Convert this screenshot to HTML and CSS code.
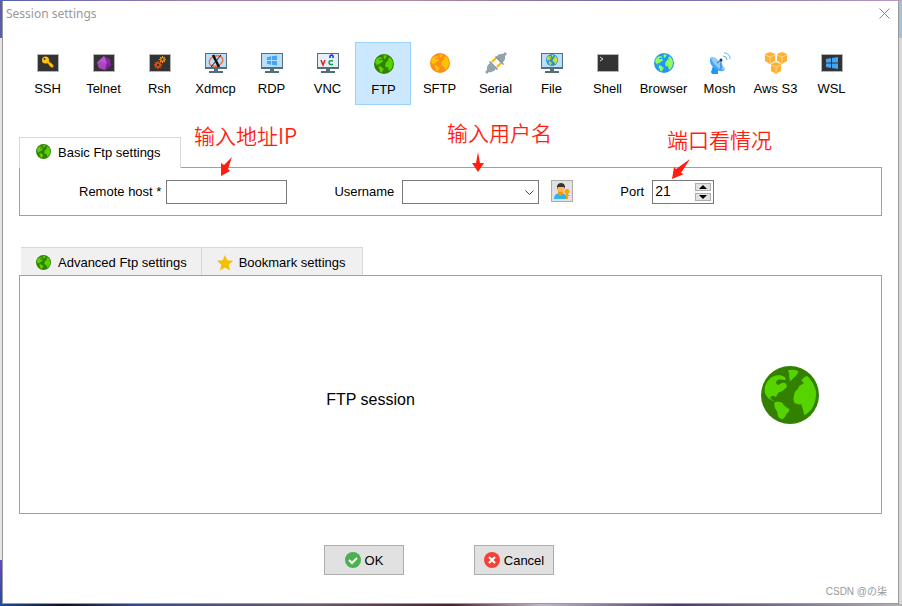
FILE: index.html
```
<!DOCTYPE html>
<html lang="en">
<head>
    <meta charset="utf-8">
    <title>Session settings</title>
    <link rel="stylesheet" href="styles.css">
</head>
<body>
    <!-- shared icon shapes -->
    <svg class="symbols" aria-hidden="true">
        <symbol id="globe" viewBox="63 48 174 174">
            <circle class="sea" cx="150" cy="135" r="87"/>
            <path class="land" d="M74 118C76 96 92 78 112 76C126 75 138 80 137 89C130 93 124 86 114 90C106 94 107 102 114 105C120 104 122 98 130 98C139 99 143 106 139 113C132 117 130 123 120 126C112 128 112 136 108 141C104 137 94 136 91 142C90 148 98 150 104 154C90 152 72 138 74 118Z"/>
            <path class="land" d="M144 61Q160 57 175 64Q174 74 165 80Q158 85 152 94Q148 90 148 82Q149 72 144 61Z"/>
            <path class="land" d="M105 156Q116 153 127 158Q130 167 148 177Q149 184 139 192Q136 204 126 208Q117 206 114 198Q115 186 106 176Q100 164 105 156Z"/>
            <path class="land" d="M201 77Q190 82 183 92Q192 95 190 102Q178 104 174 116Q163 124 162 136Q158 146 163 158Q172 165 184 163Q189 176 193 196Q211 187 220 168Q229 148 228 124Q220 94 201 77Z"/>
        </symbol>
        <symbol id="console" viewBox="0 0 22 22">
            <path fill="#b4b4b4" d="M0 2h22v18H0z"/>
            <path fill="#333" d="M1 3h20v16H1z"/>
        </symbol>
        <symbol id="monitor" viewBox="0 0 22 22">
            <path fill="#546e7a" d="M0 1h22v16H0zM9 17h4v2H9zM4 19h14v2H4z"/>
            <path fill="#bbdefb" d="M1 2h20v13H1z"/>
        </symbol>
        <symbol id="windows" viewBox="0 0 12 12">
            <path fill="#42a5f5" d="M0 2l5-1v4.500H0zM6 1l6-1v5.500H6zM0 6.500h5V11l-5-1zM6 6.500h6V12l-6-1z"/>
        </symbol>
        <symbol id="gear" viewBox="0 0 12 12">
            <circle cx="6" cy="6" r="3" fill="none" stroke="currentColor" stroke-width="2"/>
            <path stroke="currentColor" stroke-width="2" d="M6 0v3M6 9v3M0 6h3M9 6h3M2 2l2 2M8 8l2 2M10 2L8 4M4 8l-2 2"/>
        </symbol>
        <symbol id="cube" viewBox="0 0 12 12">
            <path fill="#ffb031" d="M6 0l5 2v7l-5 3-5-3V2z"/>
            <path fill="none" stroke="#ffe3b0" stroke-width=".7" d="M1 3l5 2 5-2M6 5v6"/>
        </symbol>
    </svg>

    <main class="dialog">
        <header class="titlebar">
            <h1 class="title">Session settings</h1>
            <button type="button" class="close" aria-label="Close">
                <svg width="11" height="11" viewBox="0 0 11 11"><path d="M.5.5l10 10M10.500.5l-10 10" stroke="#888"/></svg>
            </button>
        </header>

        <nav class="types">
            <button type="button" class="type">
                <svg class="icon" viewBox="0 0 22 22"><use href="#console"/><circle cx="8.500" cy="8" r="3.500" fill="#ffc40c"/><path d="M10 9l6 6" stroke="#ffb300" stroke-width="2.500"/><path d="M13 14l2-2" stroke="#ffc40c" stroke-width="2"/><circle cx="7.500" cy="7" r="1" fill="#333"/></svg>
                SSH
            </button>
            <button type="button" class="type">
                <svg class="icon" viewBox="0 0 22 22"><use href="#console"/><path fill="#8e24aa" d="M11 4l6 3.500 1 6-6 4.500-6-2-2-5.500z"/><path fill="#ba55d0" d="M11 4l3 7-10-.5z"/><path fill="#ab47bc" d="M4 10.500l10 .5-2 7-6-2z"/><path fill="#7b1fa2" d="M14 11l4 2.500-6 4.500z"/></svg>
                Telnet
            </button>
            <button type="button" class="type">
                <svg class="icon" viewBox="0 0 22 22"><use href="#console"/><use class="gear-light" href="#gear" x="10" y="4" width="7" height="7"/><use class="gear-dark" href="#gear" x="5" y="9" width="8" height="8"/></svg>
                Rsh
            </button>
            <button type="button" class="type">
                <svg class="icon" viewBox="0 0 22 22"><use href="#monitor"/><ellipse cx="11" cy="9" rx="7" ry="5" fill="none" stroke="#f4703c" stroke-width="1.500" transform="rotate(-20 11 9)"/><path d="M8 3l6 12" stroke="#111" stroke-width="2.500"/><path d="M16 3L6 15" stroke="#111"/></svg>
                Xdmcp
            </button>
            <button type="button" class="type">
                <svg class="icon" viewBox="0 0 22 22"><use href="#monitor"/><use href="#windows" x="6" y="3" width="10" height="11"/></svg>
                RDP
            </button>
            <button type="button" class="type">
                <svg class="icon" viewBox="0 0 22 22"><use href="#monitor"/><path fill="#e3f0f8" d="M1 2h20v13H1z"/><path d="M4 8l2 5 2-5" fill="none" stroke="#e02020" stroke-width="1.500"/><path d="M13 6V4q2-2 3 0v2" fill="none" stroke="#1a28e0" stroke-width="1.500"/><path d="M16 9q-4-1-4 1.500t4 2" fill="none" stroke="#159a36" stroke-width="1.500"/></svg>
                VNC
            </button>
            <button type="button" class="type selected" aria-pressed="true">
                <svg class="icon" viewBox="0 0 22 22"><use href="#globe" x="1" y="1" width="20" height="20"/></svg>
                FTP
            </button>
            <button type="button" class="type">
                <svg class="icon orange" viewBox="0 0 22 22"><use href="#globe" x="1" y="1" width="20" height="20"/></svg>
                SFTP
            </button>
            <button type="button" class="type">
                <svg class="icon" viewBox="0 0 22 22"><path d="M7 10l4-4M12 15l4-4" stroke="#ffb300" stroke-width="2"/><path fill="#90a4ae" d="M11 5q3-4 7-3l2-2 2 2-2 2q1 4-3 7z"/><path fill="#78909c" d="M10 5l1-1 8 8-1 1z"/><path fill="#90a4ae" d="M5 11q-4 3-3 7l-2 2 2 2 2-2q4 1 7-3z"/><path fill="#78909c" d="M4 10l1-1 8 8-1 1z"/></svg>
                Serial
            </button>
            <button type="button" class="type">
                <svg class="icon yellow" viewBox="0 0 22 22"><use href="#monitor"/><use href="#globe" x="5" y="2" width="12" height="12"/></svg>
                File
            </button>
            <button type="button" class="type">
                <svg class="icon" viewBox="0 0 22 22"><use href="#console"/><path d="M3 5l3 2-3 2" fill="none" stroke="#ddd"/></svg>
                Shell
            </button>
            <button type="button" class="type">
                <svg class="icon blue" viewBox="0 0 22 22"><use href="#globe" x="1" y="1" width="20" height="20"/></svg>
                Browser
            </button>
            <button type="button" class="type">
                <svg class="icon" viewBox="0 0 22 22"><path fill="#2196f3" d="M4 14l5 4v4H3l-1-2z"/><path fill="#42a5f5" d="M2 5q-3 5 2 10t10 4q2-1 2-2z"/><path fill="#90caf9" d="M2 5q3-1 8 4 6 6 6 9-5 0-9-4Q2 9 2 5z"/><path d="M8 11l4-3v9" fill="none" stroke="#1565c0"/><circle cx="12" cy="8" r="1.500" fill="#0d3c7a"/><path d="M14 4q4 0 4 4M15 1q6 0 6 6" fill="none" stroke="#64b5f6"/></svg>
                Mosh
            </button>
            <button type="button" class="type">
                <svg class="icon" viewBox="0 0 22 22"><use href="#cube" x="-1" y="0" width="12" height="12"/><use href="#cube" x="11" y="0" width="12" height="12"/><use href="#cube" x="5" y="10" width="12" height="12"/></svg>
                Aws S3
            </button>
            <button type="button" class="type">
                <svg class="icon" viewBox="0 0 22 22"><use href="#console"/><use href="#windows" x="5" y="5" width="12" height="12"/></svg>
                WSL
            </button>
        </nav>

        <section class="basic">
            <div class="tabs">
                <button type="button" class="tab active"><svg class="tab-icon" viewBox="0 0 16 16"><use href="#globe" x="0" y="0" width="15" height="15"/></svg>Basic Ftp settings</button>
            </div>
            <form class="panel fields">
                <div class="field host">
                    <label for="host">Remote host *</label>
                    <input type="text" id="host" class="box">
                </div>
                <div class="field">
                    <label for="username">Username</label>
                    <div class="combo">
                        <select id="username" class="box"><option></option></select>
                        <svg class="chevron" width="9" height="5" viewBox="0 0 9 5"><path d="M.5.5l4 4 4-4" fill="none" stroke="#444"/></svg>
                    </div>
                    <button type="button" class="users" aria-label="Manage users">
                        <svg width="18" height="18" viewBox="0 0 18 18"><path fill="#29b6f6" d="M1 17q0-5 5-6h3q5 1 5 6z"/><path fill="#ff9800" d="M5 9h5v3l-2.500 2L5 12z"/><circle cx="7.500" cy="6.500" r="3.500" fill="#ffb74d"/><path fill="#37332f" d="M4 7V4q1-3 4-3t4 3v3l-1-2H5z"/><circle cx="14" cy="9.500" r="2.500" fill="#ffa000"/><path fill="#ffa000" d="M13 11h2v6h-2zM15 13h2v1h-2z"/></svg>
                    </button>
                </div>
                <div class="field">
                    <label for="port">Port</label>
                    <div class="spin">
                        <input type="number" id="port" class="box" value="21">
                        <div class="arrows">
                            <button type="button" class="step" aria-label="Increase"><svg width="8" height="4" viewBox="0 0 8 4"><path d="M4 0l4 4H0z"/></svg></button>
                            <button type="button" class="step" aria-label="Decrease"><svg width="8" height="4" viewBox="0 0 8 4"><path d="M0 0h8L4 4z"/></svg></button>
                        </div>
                    </div>
                </div>
            </form>
        </section>

        <section class="more">
            <div class="tabs inset">
                <button type="button" class="tab"><svg class="tab-icon" viewBox="0 0 16 16"><use href="#globe" x="0" y="0" width="15" height="15"/></svg>Advanced Ftp settings</button>
                <button type="button" class="tab"><svg class="tab-icon" viewBox="0 0 16 16"><path fill="#f5c000" d="M8 0l2.300 5.300 5.700.5-4.300 3.900L13 15.500 8 12.500l-5 3 1.300-5.800L0 5.800l5.700-.5z"/></svg>Bookmark settings</button>
            </div>
            <div class="panel summary">
                <p class="session-name">FTP session</p>
                <svg class="session-globe" viewBox="0 0 58 58"><use href="#globe" width="58" height="58"/></svg>
            </div>
        </section>

        <footer class="actions">
            <button type="button" class="action"><svg width="16" height="16" viewBox="0 0 16 16"><circle cx="8" cy="8" r="8" fill="#4caf50"/><path d="M4 8l3 3 5-5" fill="none" stroke="#fff" stroke-width="2"/></svg>OK</button>
            <button type="button" class="action"><svg width="16" height="16" viewBox="0 0 16 16"><circle cx="8" cy="8" r="8" fill="#f44336"/><path d="M5 5l6 6M11 5l-6 6" stroke="#fff" stroke-width="2"/></svg>Cancel</button>
        </footer>

        <!-- red notes over the form -->
        <div class="note note-host">输入地址IP</div>
        <svg class="arrow arrow-host" width="14" height="20" viewBox="0 0 14 20"><path d="M12 0L4 8 1 6v13l9-5-2-2z"/></svg>
        <div class="note note-user">输入用户名</div>
        <svg class="arrow arrow-user" width="12" height="20" viewBox="0 0 12 20"><path d="M6 0l2 11h4L6 20 0 11h4z"/></svg>
        <div class="note note-port">端口看情况</div>
        <svg class="arrow arrow-port" width="20" height="20" viewBox="0 0 20 20"><path d="M19 0L5 10 3 8 1 20l12-5-3-1z"/></svg>
        <span class="watermark">CSDN @の柒</span>
    </main>
</body>
</html>
```

FILE: styles.css
```
* {
    box-sizing: border-box;
}

body {
    margin: 0;
    padding: 1px 3px 2px 2px;
    min-height: 100vh;
    display: flex;
    font-family: "Liberation Sans", Arial, sans-serif;
    font-size: 13px;
    line-height: 15px;
    color: #000;
    background:
        linear-gradient(90deg, #5560a8, #9a7fb0 20%, #b58aa0 45%, #6f6aa8 70%, #b89ac0) top / 100% 1px no-repeat,
        linear-gradient(90deg, #1c4f9a, #101020 7%, #3a4a8a 15%, #6a5a6a 35%, #4a2030 50%, #c0b8c8 60%, #4a3a6a 75%, #b0b0b0) bottom / 100% 2px no-repeat,
        linear-gradient(#5560a8 38px, #e4e4e4 38px, #e4e4e4 560px, #6a4ac0 560px, #1c4f9a) left / 3px 100% no-repeat,
        linear-gradient(#a8c0d4 38px, #d8d8d8 38px) right / 4px 100% no-repeat;
}

button,
input,
select {
    font: inherit;
    color: inherit;
}

.symbols {
    position: absolute;
    width: 0;
    height: 0;
}

.dialog {
    position: relative;
    flex: 1;
    display: flex;
    flex-direction: column;
    padding: 0 16px 28px;
    background: #fff;
    border: 1px solid #999;
    border-top: 0;
}

.titlebar {
    display: flex;
    justify-content: space-between;
    align-items: center;
    height: 25px;
    margin: 0 -8px 16px -13px;
}

.title {
    margin: 0;
    font-family: "Noto Sans", sans-serif;
    font-size: 12px;
    font-weight: normal;
    color: #999;
}

.close {
    display: flex;
    padding: 0;
    border: 0;
    background: none;
}

/* globe colours */
.sea {
    fill: var(--sea, #338000);
}

.land {
    fill: var(--land, #55d400);
}

.orange {
    --sea: #ff8c1a;
    --land: #ffc400;
}

.yellow {
    --sea: #2196d3;
    --land: #cddc39;
}

.blue {
    --sea: #2196f3;
    --land: #8cff5a;
}

.gear-light {
    color: #ff9800;
}

.gear-dark {
    color: #e65100;
}

/* session types */
.types {
    display: flex;
    margin-bottom: 32px;
}

.type {
    display: flex;
    flex-direction: column;
    align-items: center;
    gap: 7px;
    width: 56px;
    height: 63px;
    padding: 9px 0 0 1px;
    border: 1px solid transparent;
    background: none;
    white-space: nowrap;
}

.type.selected {
    padding-top: 10px;
    background: #cce8ff;
    border-color: #99d1ff;
}

.icon {
    width: 22px;
    height: 22px;
    flex: none;
}

/* tabs */
.tabs {
    display: flex;
}

.tabs.inset {
    padding-left: 2px;
}

.tab {
    display: flex;
    align-items: center;
    gap: 6px;
    min-width: 161px;
    height: 28px;
    padding: 2px 14px 0 15px;
    border: 1px solid #d9d9d9;
    border-width: 1px 1px 0 0;
    background: #f0f0f0;
}

.tab.active {
    position: relative;
    min-width: 162px;
    height: 31px;
    padding: 0 16px 2px;
    margin-bottom: -1px;
    border-left-width: 1px;
    background: #fff;
}

.tab-icon {
    width: 16px;
    height: 16px;
}

.panel {
    border: 1px solid #a0a0a0;
}

.basic {
    margin-bottom: 31px;
}

.fields {
    display: flex;
    gap: 47px;
    padding: 12px 16px 11px 59px;
}

.field {
    display: flex;
    align-items: center;
    gap: 8px;
}

.field label {
    padding-bottom: 2px;
}

.host {
    gap: 5px;
}

.box {
    width: 121px;
    height: 24px;
    padding: 0 2px;
    border: 1px solid #7a7a7a;
    border-radius: 0;
    background: #fff;
    appearance: none;
}

.combo,
.spin {
    position: relative;
    display: flex;
}

.combo .box {
    width: 137px;
}

.chevron {
    position: absolute;
    top: 10px;
    right: 5px;
    pointer-events: none;
}

.users {
    display: flex;
    align-items: center;
    justify-content: center;
    align-self: flex-start;
    width: 22px;
    height: 22px;
    margin-left: 4px;
    padding: 0;
    border: 1px solid #adadad;
    background: #e1e1e1;
}

.spin .box {
    width: 62px;
    padding-bottom: 2px;
    font-size: 14px;
    appearance: textfield;
}

.spin .box::-webkit-inner-spin-button {
    appearance: none;
}

.arrows {
    position: absolute;
    top: 3px;
    right: 3px;
    display: flex;
    flex-direction: column;
    gap: 2px;
}

.step {
    display: flex;
    align-items: center;
    justify-content: center;
    width: 16px;
    height: 8px;
    padding: 0;
    border: 1px solid #adadad;
    background: #e1e1e1;
}

/* lower part */
.more {
    flex: 1;
    display: flex;
    flex-direction: column;
}

.summary {
    flex: 1;
    display: flex;
    align-items: center;
    padding-right: 62px;
}

.session-name {
    flex: 1;
    margin: 10px 0 0;
    padding-right: 40px;
    text-align: center;
    font-size: 16px;
}

.session-globe {
    width: 58px;
    height: 58px;
}

.actions {
    display: flex;
    justify-content: center;
    gap: 70px;
    padding-right: 23px;
    margin-top: 31px;
}

.action {
    display: flex;
    align-items: center;
    justify-content: center;
    gap: 4px;
    width: 80px;
    height: 30px;
    padding: 0;
    border: 1px solid #adadad;
    background: #e1e1e1;
}

/* notes */
.note {
    position: absolute;
    font-family: "Noto Sans CJK SC", sans-serif;
    font-size: 21px;
    font-weight: 350;
    line-height: 28px;
    white-space: nowrap;
    color: #ff1e10;
}

.note-host {
    left: 191px;
    top: 120px;
}

.note-user {
    left: 444px;
    top: 117px;
}

.note-port {
    left: 664px;
    top: 124px;
}

.arrow {
    position: absolute;
    fill: #ff1e10;
}

.arrow-host {
    left: 217px;
    top: 156px;
}

.arrow-user {
    left: 469px;
    top: 151px;
}

.arrow-port {
    left: 668px;
    top: 158px;
}

.watermark {
    position: absolute;
    right: 11px;
    bottom: 4px;
    font-family: "Liberation Sans", "Noto Sans CJK JP", sans-serif;
    font-size: 10px;
    color: #999;
}
```
